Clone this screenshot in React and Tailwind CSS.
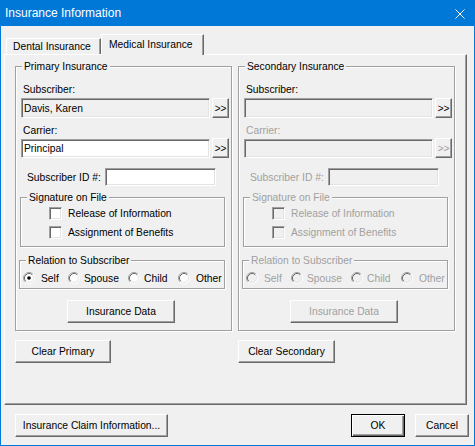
import React from 'react';

// classic win32 bevels
const raised = 'border border-t-white border-l-white border-r-[#696969] border-b-[#696969] shadow-[inset_-1px_-1px_0_#a0a0a0]';
const sunken = 'border border-t-[#a0a0a0] border-l-[#a0a0a0] border-r-white border-b-white shadow-[inset_1px_1px_0_#696969,inset_-1px_-1px_0_#e3e3e3]';
const etched = 'border border-[#a0a0a0] shadow-[inset_1px_1px_0_#fff,1px_1px_0_#fff]';
const grey = 'text-[#a0a0a0]';

function Button({ className = '', disabled, children }) {
  return (
    <button type="button" className={`${raised} flex items-center justify-center leading-[13px] ${disabled ? grey : 'text-black'} ${className}`}>
      {children}
    </button>
  );
}

function GroupBox({ title, dim, className = '', children }) {
  return (
    <div className={`relative ${etched} ${className}`}>
      <span className={`absolute -top-[7px] left-[6px] px-[2px] bg-[#f0f0f0] leading-[13px] whitespace-nowrap ${dim ? grey : ''}`}>{title}</span>
      {children}
    </div>
  );
}

function Check({ label, dim }) {
  return (
    <div className="flex items-center h-[13px]">
      <span className={`w-[13px] h-[13px] shrink-0 ${sunken} ${dim ? 'bg-[#f0f0f0]' : 'bg-white'}`} />
      <span className={`ml-[6px] leading-[13px] ${dim ? grey : ''}`}>{label}</span>
    </div>
  );
}

function RadioDot({ checked, dim }) {
  return (
    <svg width="12" height="12" viewBox="0 0 12 12" className="shrink-0">
      <circle cx="6" cy="6" r="5" fill={dim ? '#f0f0f0' : '#fff'} />
      <path d="M2.11 9.89 A5.5 5.5 0 0 1 9.89 2.11" fill="none" stroke="#a0a0a0" />
      <path d="M9.89 2.11 A5.5 5.5 0 0 1 2.11 9.89" fill="none" stroke="#fff" />
      <path d="M2.82 9.18 A4.5 4.5 0 0 1 9.18 2.82" fill="none" stroke="#696969" />
      <path d="M9.18 2.82 A4.5 4.5 0 0 1 2.82 9.18" fill="none" stroke="#e3e3e3" />
      {checked && <circle cx="6" cy="6" r="1.8" fill="#000" />}
    </svg>
  );
}

function Radio({ label, checked, dim, className = '', gap = 'ml-[4px]' }) {
  return (
    <div className={`flex items-center h-[12px] ${className}`}>
      <RadioDot checked={checked} dim={dim} />
      <span className={`${gap} leading-[13px] ${dim ? grey : ''}`}>{label}</span>
    </div>
  );
}

function InsuranceColumn({ secondary }) {
  const d = secondary;
  return (
    <div className="w-[217px] flex flex-col">
      <GroupBox title={d ? 'Secondary Insurance' : 'Primary Insurance'} className="mt-[11px] h-[265px] pl-[4px] flex flex-col">
        <div className="mt-[16px] ml-[3px] h-[13px] leading-[13px]">Subscriber:</div>
        <div className="mt-[2px] ml-[1px] flex h-[20px]">
          <div className={`w-[189px] h-[20px] ${sunken} bg-[#f0f0f0] pl-[2px] flex items-center leading-[13px]`}>
            {d ? '' : 'Davis, Karen'}
          </div>
          <Button className="ml-[2px] w-[17px] h-[20px] text-[10px]">&gt;&gt;</Button>
        </div>
        <div className={`mt-[6px] ml-[3px] h-[13px] leading-[13px] ${d ? grey : ''}`}>Carrier:</div>
        <div className="mt-[2px] ml-[1px] flex h-[19px]">
          <div className={`w-[189px] h-[19px] ${sunken} ${d ? 'bg-[#f0f0f0]' : 'bg-white'} pl-[2px] flex items-center leading-[13px]`}>
            {d ? '' : 'Principal'}
          </div>
          <Button disabled={d} className="ml-[2px] w-[17px] h-[20px] -mt-[1px] text-[10px]">&gt;&gt;</Button>
        </div>
        <div className="mt-[10px] ml-[7px] flex items-center h-[18px]">
          <span className={`w-[78px] leading-[13px] ${d ? grey : ''}`}>Subscriber ID #:</span>
          <div className={`w-[111px] h-[18px] ${sunken} ${d ? 'bg-[#f0f0f0]' : 'bg-white'}`} />
        </div>
        <GroupBox title="Signature on File" dim={d} className="mt-[11px] w-[205px] h-[50px] pl-[28px] pt-[9px] flex flex-col">
          <Check label="Release of Information" dim={d} />
          <div className="mt-[6px]">
            <Check label="Assignment of Benefits" dim={d} />
          </div>
        </GroupBox>
        <GroupBox title="Relation to Subscriber" dim={d} className="mt-[13px] -ml-[1px] w-[206px] h-[29px] pl-[3px] pt-[11px] flex">
          <Radio label="Self" checked={!d} dim={d} gap="ml-[6px]" className="w-[45px]" />
          <Radio label="Spouse" dim={d} className="w-[60px]" />
          <Radio label="Child" dim={d} className="w-[50px]" />
          <Radio label="Other" dim={d} gap="ml-[6px]" />
        </GroupBox>
        <Button disabled={d} className="mt-[11px] ml-[47px] w-[108px] h-[23px]">Insurance Data</Button>
      </GroupBox>
      <Button className={`mt-[9px] h-[23px] ${d ? 'w-[97px]' : 'w-[96px]'}`}>{d ? 'Clear Secondary' : 'Clear Primary'}</Button>
    </div>
  );
}

export default function App() {
  return (
    <div className="w-[475px] h-[446px] border border-[#0078d7] bg-[#f0f0f0] flex flex-col text-[10.3px] leading-[13px] text-black font-['Liberation_Sans',Arial,sans-serif] overflow-hidden">
      {/* title bar */}
      <div className="h-[25px] shrink-0 bg-[#0078d7] flex items-center justify-between pl-[4px] pr-[9px] text-white text-[12px]">
        <span>Insurance Information</span>
        <svg width="10" height="10" viewBox="0 0 10 10">
          <path d="M0.5 0.5 L9.5 9.5 M9.5 0.5 L0.5 9.5" stroke="#fff" strokeWidth="1" />
        </svg>
      </div>

      <div className="pl-[3px] pt-[8px]">
        {/* tabs */}
        <div className="relative z-10 flex items-end h-[21px] -mb-[1px] pl-[2px]">
          <div className="mb-[1px] w-[95px] h-[16px] border-t border-l border-r border-t-white border-l-white border-r-[#696969] shadow-[inset_-1px_0_0_#a0a0a0] pl-[6px] flex items-center">
            Dental Insurance
          </div>
          <div className="w-[103px] h-[21px] bg-[#f0f0f0] border-t border-l border-r border-t-white border-l-white border-r-[#696969] shadow-[inset_-1px_0_0_#a0a0a0] pl-[7px] pb-[2px] flex items-center">
            Medical Insurance
          </div>
        </div>
        {/* tab page */}
        <div className="w-[463px] h-[351px] border border-t-white border-l-white border-r-[#696969] border-b-[#696969] shadow-[inset_-1px_-1px_0_#a0a0a0] pl-[10px] flex gap-[6px]">
          <InsuranceColumn />
          <InsuranceColumn secondary />
        </div>
      </div>

      <div className="mt-[9px] flex pl-[14px] pr-[5px]">
        <Button className="w-[153px] h-[23px]">Insurance Claim Information...</Button>
        <button type="button" className="ml-auto w-[54px] h-[23px] border border-black shadow-[inset_1px_1px_0_#fff,inset_-1px_-1px_0_#696969,inset_-2px_-2px_0_#a0a0a0] flex items-center justify-center leading-[13px]">
          OK
        </button>
        <Button className="ml-[10px] w-[54px] h-[23px]">Cancel</Button>
      </div>
    </div>
  );
}
